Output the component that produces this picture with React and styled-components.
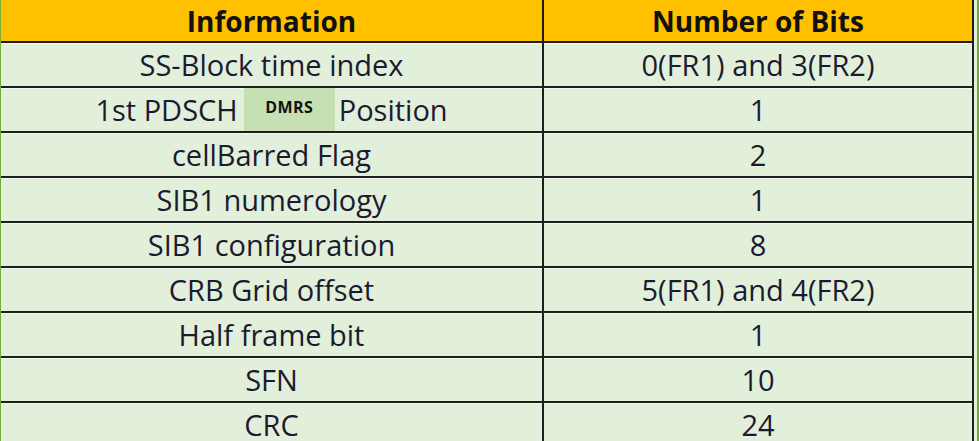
import React from "react";
import styled, { createGlobalStyle } from "styled-components";

const Global = createGlobalStyle`
  html, body {
    margin: 0;
    padding: 0;
    background: #e2efda;
    overflow: hidden;
  }
  body {
    font-family: "Open Sans", "Liberation Sans", sans-serif;
  }
`;

const rows = [
  ["SS-Block time index", "0(FR1) and 3(FR2)"],
  ["1st PDSCH", "1", true],
  ["cellBarred Flag", "2"],
  ["SIB1 numerology", "1"],
  ["SIB1 configuration", "8"],
  ["CRB Grid offset", "5(FR1) and 4(FR2)"],
  ["Half frame bit", "1"],
  ["SFN", "10"],
  ["CRC", "24"],
];

const Frame = styled.div`
  display: flex;
  width: 979px;
  height: 441px;
  overflow: hidden;
  border-left: 1px solid #77ac35;
  border-right: 2px solid #77ac35;
  box-sizing: border-box;
`;

const Sheet = styled.div`
  width: 973px;
  border-right: 2px solid #1e1e1e;
  margin-right: 3px;
`;

const Row = styled.div`
  display: grid;
  grid-template-columns: 541px 1fr;
  height: ${(p) => (p.$head ? "41px" : "43px")};
  background: ${(p) => (p.$head ? "#ffc000" : "#e2efda")};
  border-bottom: 2px solid #1e1e1e;
  box-shadow: inset 0 1px 0 ${(p) => (p.$head ? "#ffc000" : "#f4f9f0")};
`;

const Cell = styled.div`
  display: flex;
  align-items: center;
  justify-content: center;
  font-size: ${(p) => (p.$head ? "28px" : "29px")};
  font-weight: ${(p) => (p.$head ? 700 : 400)};
  color: ${(p) => (p.$head ? "#111" : "#1b1b30")};
  white-space: nowrap;
  & + & {
    border-left: 2px solid #1e1e1e;
  }
`;

const Tag = styled.span`
  display: block;
  box-sizing: border-box;
  padding-top: 11px;
  width: 91px;
  height: 43px;
  margin: 0 4px 0 6px;
  background: #c6e0b4;
  font-size: 16px;
  line-height: 16px;
  font-weight: 700;
  letter-spacing: 0.4px;
  text-align: center;
  color: #111;
`;

export default function App() {
  return (
    <Frame>
      <Global />
      <Sheet>
        <Row $head>
          <Cell $head>Information</Cell>
          <Cell $head>Number of Bits</Cell>
        </Row>
        {rows.map(([name, bits, dmrs]) => (
          <Row key={name}>
            <Cell>
              {name}
              {dmrs && (
                <>
                  <Tag>DMRS</Tag>Position
                </>
              )}
            </Cell>
            <Cell>{bits}</Cell>
          </Row>
        ))}
      </Sheet>
    </Frame>
  );
}
